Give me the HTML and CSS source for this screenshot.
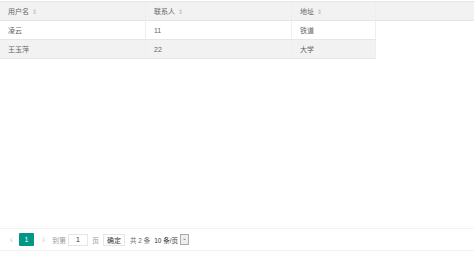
FILE: index.html
```html
<!DOCTYPE html>
<html lang="zh">
<head>
    <meta charset="UTF-8">
    <title>用户列表</title>
    <link rel="stylesheet" href="styles.css">
</head>
<body>
    <div class="table-box">
        <div class="table-head">
            <div class="cell col-a">用户名 <span class="sort">&#8661;</span></div>
            <div class="cell col-b">联系人 <span class="sort">&#8661;</span></div>
            <div class="cell col-c">地址 <span class="sort">&#8661;</span></div>
            <div class="cell col-rest"></div>
        </div>
        <div class="table-body">
            <div class="row">
                <div class="cell col-a">凌云</div>
                <div class="cell col-b">11</div>
                <div class="cell col-c">铁道</div>
            </div>
            <div class="row alt">
                <div class="cell col-a">王玉萍</div>
                <div class="cell col-b">22</div>
                <div class="cell col-c">大学</div>
            </div>
        </div>
    </div>

    <div class="pager">
        <span class="arrow">&lsaquo;</span>
        <span class="page-current">1</span>
        <span class="arrow">&rsaquo;</span>
        <span class="label skip">到第</span>
        <span class="page-input">1</span>
        <span class="label">页</span>
        <span class="btn-ok">确定</span>
        <span class="count">共 2 条</span>
        <span class="limit">10 条/页<span class="limit-arrow">&#8964;</span></span>
    </div>
</body>
</html>
```

FILE: styles.css
```css
body {
    margin: 0;
    background: #fff;
    font-family: "Liberation Sans", "Noto Sans CJK SC", sans-serif;
    font-size: 7px;
    color: #666;
    width: 474px;
    height: 267px;
    display: flex;
    flex-direction: column;
}
.table-box {
    margin-top: 1px;
    border-top: 1px solid #e6e6e6;
}
.table-head {
    display: flex;
    height: 18px;
    background: #f2f2f2;
    border-bottom: 1px solid #e6e6e6;
}
.table-body {
    width: 376px;
}
.row {
    display: flex;
    height: 18px;
    border-bottom: 1px solid #e6e6e6;
}
.row.alt {
    background: #f2f2f2;
}
.cell {
    display: flex;
    align-items: center;
    padding-left: 8px;
    box-sizing: border-box;
    border-right: 1px solid #eee;
    white-space: nowrap;
}
.col-a { width: 146px; }
.col-b { width: 146px; }
.col-c { width: 84px; }
.col-rest { flex: 1; border-right: none; }
.sort {
    font-size: 6px;
    color: #b2b2b2;
    margin-left: 3px;
}
.pager {
    margin-top: auto;
    margin-bottom: 16px;
    height: 21px;
    border-top: 1px solid #f2f2f2;
    border-bottom: 1px solid #f2f2f2;
    display: flex;
    align-items: center;
    padding-left: 8px;
}
.arrow {
    width: 7px;
    text-align: center;
    font-size: 10px;
    color: #d2d2d2;
    margin-right: 4px;
}
.page-current {
    width: 15px;
    height: 13px;
    background: #009688;
    color: #fff;
    border-radius: 1px;
    display: flex;
    align-items: center;
    justify-content: center;
    margin-right: 6px;
}
.label {
    color: #999;
}
.skip {
    margin-left: 1px;
}
.page-input {
    width: 20px;
    height: 12px;
    border: 1px solid #e6e6e6;
    box-sizing: border-box;
    display: flex;
    align-items: center;
    justify-content: center;
    color: #333;
    margin: 0 4px 0 2px;
}
.btn-ok {
    height: 12px;
    padding: 0 3px;
    border: 1px solid #e6e6e6;
    box-sizing: border-box;
    display: flex;
    align-items: center;
    color: #333;
    margin-left: 4px;
}
.count {
    color: #666;
    margin-left: 5px;
    font-size: 6.5px;
}
.limit {
    display: flex;
    align-items: center;
    color: #333;
    margin-left: 4px;
    gap: 2px;
    font-size: 6.5px;
}
.limit-arrow {
    width: 9px;
    height: 11px;
    border: 1px solid #aaa;
    background: #eee;
    box-sizing: border-box;
    font-size: 6px;
    line-height: 6px;
    text-align: center;
    color: #666;
}
```
